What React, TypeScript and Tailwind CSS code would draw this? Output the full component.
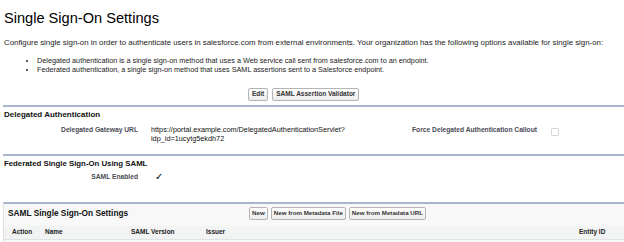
import React from 'react';

const Btn = ({ children, small }: { children: React.ReactNode; small?: boolean }) => (
  <button
    className={
      small
        ? 'h-[13px] px-[2px] border border-[#b5b5b5] rounded-[2px] bg-gradient-to-b from-[#ffffff] to-[#ececec] text-[6.2px] font-bold text-[#333] leading-none'
        : 'h-[13px] px-[3px] border border-[#b5b5b5] rounded-[2px] bg-gradient-to-b from-[#ffffff] to-[#ececec] text-[6.5px] font-bold text-[#333] leading-none'
    }
  >
    {children}
  </button>
);

export default function App() {
  return (
    <div className="w-[624px] h-[242px] bg-white overflow-hidden text-black" style={{ fontFamily: '"Liberation Sans", Arial, sans-serif' }}>
      {/* Header */}
      <h1 className="pl-[4px] pt-[9px] text-[14.6px] leading-[18px] font-normal text-black">Single Sign-On Settings</h1>
      <p className="pl-[4px] mt-[11px] text-[7.85px] leading-[10px] text-[#222] whitespace-nowrap">
        Configure single sign-on in order to authenticate users in salesforce.com from external environments. Your organization has the following options available for single sign-on:
      </p>
      <ul className="list-disc pl-[37px] mt-[8px] text-[7.25px] leading-[9px] text-[#222]">
        <li>Delegated authentication is a single sign-on method that uses a Web service call sent from salesforce.com to an endpoint.</li>
        <li>Federated authentication, a single sign-on method that uses SAML assertions sent to a Salesforce endpoint.</li>
      </ul>
      <div className="flex gap-[4px] pl-[248px] mt-[14px]">
        <Btn>Edit</Btn>
        <Btn>SAML Assertion Validator</Btn>
      </div>

      {/* Delegated Authentication */}
      <div className="ml-[3px] mt-[4px] border-t-2 border-[#a8b6cc]">
        <h3 className="pl-[1px] pt-[2px] text-[8px] leading-[11px] font-bold text-[#111]">Delegated Authentication</h3>
        <div className="flex mt-[4.5px] leading-[9px]">
          <div className="w-[135px] text-right text-[6.7px] font-bold text-[#4a4a56]">Delegated Gateway URL</div>
          <div className="w-[262px] pl-[13px] text-[7.3px] text-[#111]">
            https://portal.example.com/DelegatedAuthenticationServlet?
            <br />
            idp_id=1ucytg5ekdh72
          </div>
          <div className="w-[137px] text-right text-[6.7px] font-bold text-[#4a4a56] whitespace-nowrap">Force Delegated Authentication Callout</div>
          <div className="pl-[14px] pt-[3px]">
            <div className="w-[8px] h-[8px] border border-[#d8d8d8] rounded-[1px]" />
          </div>
        </div>
      </div>

      {/* Federated */}
      <div className="ml-[3px] mt-[11px] border-t-2 border-[#a8b6cc]">
        <h3 className="pl-[1px] pt-[2px] text-[7.8px] leading-[11px] font-bold text-[#111]">Federated Single Sign-On Using SAML</h3>
        <div className="flex mt-[3px] leading-[10px]">
          <div className="w-[135px] text-right text-[6.7px] font-bold text-[#4a4a56]">SAML Enabled</div>
          <div className="pl-[17px] text-[10px] leading-[10px] text-black">✓</div>
        </div>
      </div>

      {/* SAML SSO Settings */}
      <div className="ml-[3px] mt-[20px] border-t-2 border-l border-[#a8b6cc] border-l-[#e0e0e0] bg-[#f8f8f8] h-[60px]">
        <div className="flex items-center h-[19px]">
          <h3 className="w-[245px] pl-[4px] text-[8.3px] font-bold text-[#111]">SAML Single Sign-On Settings</h3>
          <div className="flex gap-[3px]">
            <Btn small>New</Btn>
            <Btn small>New from Metadata File</Btn>
            <Btn small>New from Metadata URL</Btn>
          </div>
        </div>
        <div className="mt-[3px] flex items-center h-[14px] bg-[#f2f3f3] border-b border-[#e0e3e5] text-[6.5px] font-bold text-[#222]">
          <div className="w-[41px] pl-[8px]">Action</div>
          <div className="w-[86px]">Name</div>
          <div className="w-[75px]">SAML Version</div>
          <div className="flex-1">Issuer</div>
          <div className="w-[45px]">Entity ID</div>
        </div>
      </div>
    </div>
  );
}
